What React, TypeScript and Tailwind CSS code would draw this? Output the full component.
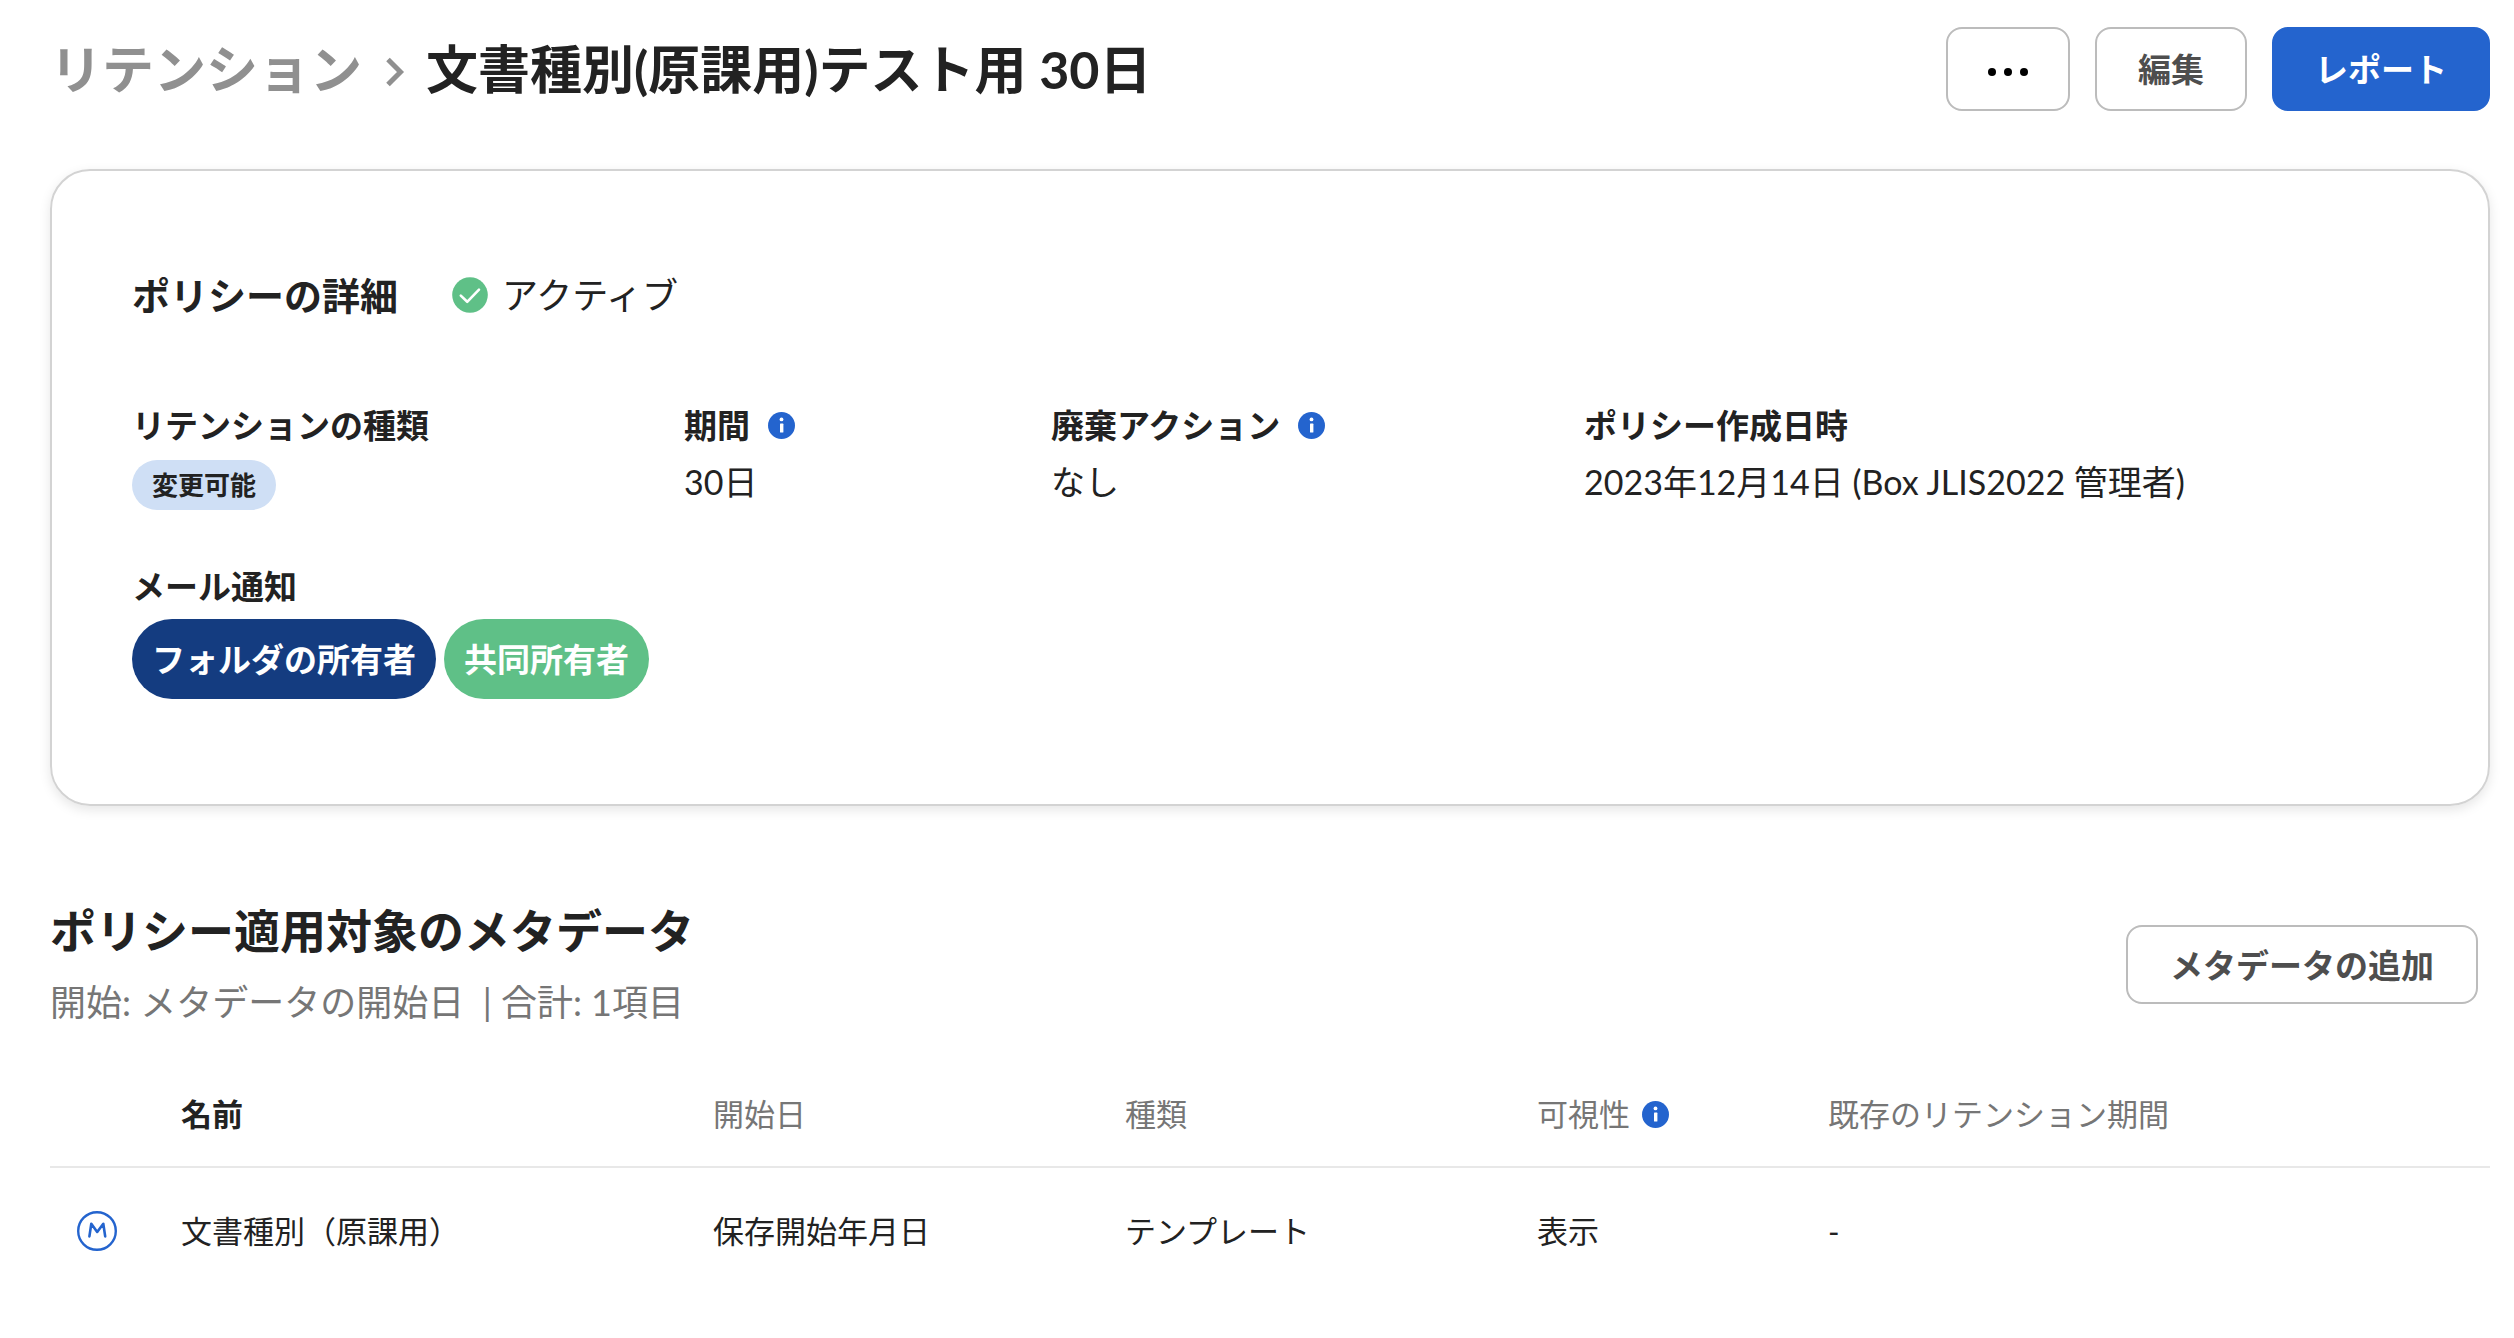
import type { ReactNode } from 'react'
import { clsx } from 'clsx'

interface MetadataRow {
  name: string
  startDate: string
  type: string
  visibility: string
  existingPeriod: string
}

const rows: MetadataRow[] = [
  {
    name: '文書種別（原課用）',
    startDate: '保存開始年月日',
    type: 'テンプレート',
    visibility: '表示',
    existingPeriod: '-',
  },
]

const InfoIcon = () => (
  <svg viewBox="0 0 27 27" className="size-[27px] shrink-0" aria-hidden="true">
    <circle cx="13.5" cy="13.5" r="13.5" fill="#2464ce" />
    <circle cx="13.5" cy="7.4" r="1.9" fill="#fff" />
    <rect x="12" y="11.6" width="3.4" height="9" rx="0.6" fill="#fff" />
  </svg>
)

const CheckIcon = () => (
  <svg viewBox="0 0 36 36" className="size-9 shrink-0" aria-hidden="true">
    <circle cx="18" cy="18" r="17.8" fill="#5fc087" />
    <path d="M8.8 18.6l6.4 6.2L27 12.6" fill="none" stroke="#fff" strokeWidth="2.6" strokeLinecap="round" strokeLinejoin="round" />
  </svg>
)

const MetadataIcon = () => (
  <svg viewBox="0 0 40 40" className="size-10" aria-hidden="true">
    <circle cx="20" cy="20" r="18.8" fill="none" stroke="#2464ce" strokeWidth="2.4" />
    <path d="M12.4 25.4l1.9-12.6L20.2 21l6.1-8.2 1.9 12.6" fill="none" stroke="#2464ce" strokeWidth="2.6" strokeLinecap="round" strokeLinejoin="round" />
  </svg>
)

interface ButtonProps {
  className?: string
  label?: string
  children: ReactNode
}

const Button = ({ className, label, children }: ButtonProps) => (
  <button
    type="button"
    aria-label={label}
    className={clsx(
      'flex items-center justify-center rounded-2xl border-2 text-[33px] leading-[48px] font-bold',
      className
    )}
  >
    {children}
  </button>
)

interface FieldProps {
  label: string
  info?: boolean
  children: ReactNode
}

const Field = ({ label, info, children }: FieldProps) => (
  <div>
    <dt className="flex items-center gap-[18px] text-[33px] leading-[48px] font-bold">
      {label}
      {info && <InfoIcon />}
    </dt>
    <dd className="mt-[9px] text-[34px] leading-[48px]">{children}</dd>
  </div>
)

export default function App() {
  return (
    <main className="bg-white pt-[27px] pr-6 pb-16 pl-[50px] font-['Lato','Noto_Sans_CJK_JP',sans-serif] text-[#222222]">
      <header className="flex items-center justify-between">
        <nav className="flex items-center text-[52px] leading-[84px] font-bold">
          <a href="#retention" className="text-[#909090]">リテンション</a>
          <svg viewBox="0 0 20 36" className="mx-[22px] h-9 w-5 overflow-visible" aria-hidden="true">
            <path d="M4 8.5L16.5 21 4 33.5" fill="none" stroke="#909090" strokeWidth="5" />
          </svg>
          <h1>文書種別(原課用)テスト用 30日</h1>
        </nav>
        <div className="flex gap-[25px]">
          <Button label="その他" className="h-[84px] border-[#bcbcbc] px-10 text-black">
            <svg viewBox="0 0 40 16" className="h-4 w-10" aria-hidden="true">
              <circle cx="4" cy="11" r="4" />
              <circle cx="20" cy="11" r="4" />
              <circle cx="36" cy="11" r="4" />
            </svg>
          </Button>
          <Button className="h-[84px] border-[#bcbcbc] px-[41px] text-[#4e4e4e]">編集</Button>
          <Button className="h-[84px] border-[#2464ce] bg-[#2464ce] px-[41px] text-white">レポート</Button>
        </div>
      </header>

      <section className="mt-[58px] rounded-[40px] border-2 border-[#d3d3d3] px-20 pt-24 pb-[105px] shadow-[0_4px_12px_rgba(0,0,0,0.1)]">
        <div className="flex items-center">
          <h2 className="text-[38px] leading-14 font-bold">ポリシーの詳細</h2>
          <div className="ml-[54px] flex items-center gap-[14px] text-[36px] leading-14">
            <CheckIcon />
            アクティブ
          </div>
        </div>
        <dl className="mt-[78px] grid grid-cols-[552px_367px_533px_1fr] gap-y-[52px]">
          <Field label="リテンションの種類">
            <span className="inline-block rounded-full bg-[#cfdff5] px-5 text-[26px] leading-[50px] font-bold">変更可能</span>
          </Field>
          <Field label="期間" info>30日</Field>
          <Field label="廃棄アクション" info>なし</Field>
          <Field label="ポリシー作成日時">2023年12月14日 (Box JLIS2022 管理者)</Field>
          <div className="col-span-4">
            <dt className="text-[33px] leading-[48px] font-bold">メール通知</dt>
            <dd className="mt-[9px] flex gap-2 text-[33px] leading-20 font-bold text-white">
              <span className="rounded-full bg-[#143c80] px-5">フォルダの所有者</span>
              <span className="rounded-full bg-[#5fc087] px-5">共同所有者</span>
            </dd>
          </div>
        </dl>
      </section>

      <section className="mt-[95px]">
        <div className="flex items-center justify-between pr-3">
          <div>
            <h2 className="text-[46px] leading-[60px] font-bold">ポリシー適用対象のメタデータ</h2>
            <p className="mt-[15px] text-[36px] leading-[52px] whitespace-pre text-[#767676]">
              {'開始: メタデータの開始日  | 合計: 1項目'}
            </p>
          </div>
          <Button className="h-[79px] border-[#bcbcbc] px-[42px] text-[#4e4e4e]">メタデータの追加</Button>
        </div>

        <table className="mt-[34px] w-full table-fixed text-left text-[31px] leading-[46px]">
          <thead>
            <tr className="h-[105px] border-b-2 border-[#e8e8e8] text-[#767676]">
              <th className="w-[131px]" aria-label="アイコン" />
              <th className="w-[532px] font-bold text-[#222222]">名前</th>
              <th className="w-[412px] font-normal">開始日</th>
              <th className="w-[412px] font-normal">種類</th>
              <th className="w-[291px] font-normal">
                <span className="flex items-center gap-3">
                  可視性
                  <InfoIcon />
                </span>
              </th>
              <th className="font-normal">既存のリテンション期間</th>
            </tr>
          </thead>
          <tbody>
            {rows.map((row) => (
              <tr key={row.name} className="h-[126px]">
                <td className="pl-[27px]">
                  <MetadataIcon />
                </td>
                <td>{row.name}</td>
                <td>{row.startDate}</td>
                <td>{row.type}</td>
                <td>{row.visibility}</td>
                <td>{row.existingPeriod}</td>
              </tr>
            ))}
          </tbody>
        </table>
      </section>
    </main>
  )
}
